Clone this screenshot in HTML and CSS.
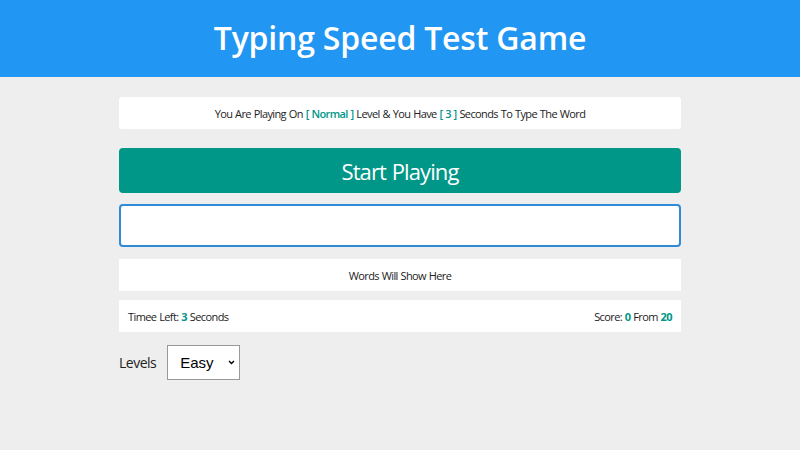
FILE: index.html
```html
<!DOCTYPE html>
<html>
<head>
<meta charset="utf-8">
<link rel="stylesheet" href="styles.css">
</head>
<body>
<header class="name">Typing Speed Test Game</header>
<main class="game">
  <div class="message"><span>You Are Playing On <span class="hl">[ Normal ]</span> Level &amp; You Have <span class="hl">[ 3 ]</span> Seconds To Type The Word</span></div>
  <button class="start">Start Playing</button>
  <input class="input" type="text">
  <div class="the-word"><span>Words Will Show Here</span></div>
  <div class="control">
    <span>Timee Left: <b class="hl">3</b> Seconds</span>
    <span>Score: <b class="hl">0</b> From <b class="hl">20</b></span>
  </div>
  <div class="levels">
    <label>Levels</label>
    <select class="select"><option>Easy</option><option>Normal</option><option>Hard</option></select>
  </div>
</main>
</body>
</html>
```
FILE: styles.css
```css
* { box-sizing: border-box; }
body {
  margin: 0;
  background: #eeeeee;
  font-family: "Open Sans", sans-serif;
  color: #222;
}
.name {
  background: #2196f3;
  color: #fff;
  height: 77px;
  display: flex;
  align-items: center;
  justify-content: center;
  font-size: 32px;
  font-weight: 600;
  letter-spacing: -0.2px;
  padding-bottom: 2px;
}
.game {
  width: 562px;
  margin: 20px auto 0;
  display: flex;
  flex-direction: column;
}
.message {
  background: #fff;
  border-radius: 3px;
  height: 32px;
  display: flex;
  align-items: center;
  justify-content: center;
  font-size: 11px;
  letter-spacing: -0.6px;
  word-spacing: 0.5px;
}
.hl { color: #009688; font-weight: 600; }
.control .hl { font-weight: 700; }
.start {
  margin-top: 19px;
  height: 45px;
  border: none;
  border-radius: 4px;
  background: #009688;
  color: #fff;
  font-family: "Open Sans", sans-serif;
  font-size: 22px;
  font-weight: 500;
  letter-spacing: -0.9px;
  word-spacing: 1px;
  padding: 0;
}
.input {
  margin-top: 11px;
  height: 43px;
  border: 2px solid #2f8ad8;
  border-radius: 4px;
  background: #fff;
  outline: none;
}
.the-word {
  margin-top: 12px;
  background: #fff;
  height: 32px;
  display: flex;
  align-items: center;
  justify-content: center;
  font-size: 11px;
  letter-spacing: -0.6px;
  word-spacing: 0.5px;
}
.control {
  margin-top: 9px;
  background: #fff;
  height: 32px;
  display: flex;
  align-items: center;
  justify-content: space-between;
  padding: 0 9px;
  font-size: 11px;
  letter-spacing: -0.6px;
  word-spacing: 0.5px;
}
.levels {
  margin-top: 13px;
  display: flex;
  align-items: center;
  gap: 11px;
}
.levels label { font-size: 14px; letter-spacing: -0.5px; }
.select {
  appearance: none;
  -webkit-appearance: none;
  width: 73px;
  height: 35px;
  font-family: "Liberation Sans", Arial, sans-serif;
  font-size: 15px;
  padding: 0 0 0 12px;
  border: 1px solid #999;
  border-radius: 0;
  background: #fff url("data:image/svg+xml,%3Csvg xmlns='http://www.w3.org/2000/svg' width='7' height='5' viewBox='0 0 7 5'%3E%3Cpath d='M1 1l2.5 2.5L6 1' fill='none' stroke='%23000' stroke-width='1.4'/%3E%3C/svg%3E") no-repeat right 4px center;
  color: #000;
}
```
